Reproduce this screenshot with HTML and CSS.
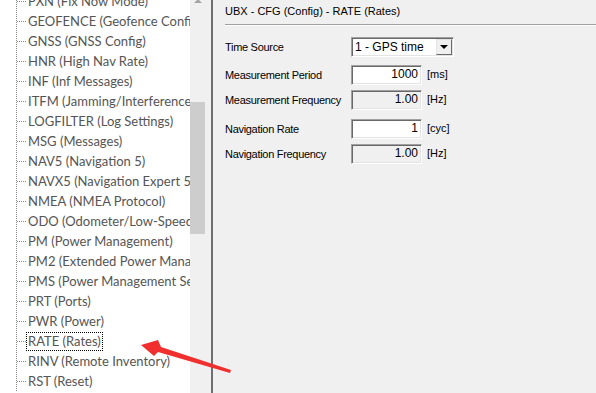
FILE: index.html
```html
<!DOCTYPE html>
<html lang="en">
<head>
    <meta charset="UTF-8">
    <title>UBX - CFG - RATE</title>
    <link rel="stylesheet" href="styles.css">
</head>
<body>

    <div class="tree">
        <ul class="tree-list">
            <li><span class="label">PXN (Fix Now Mode)</span></li>
            <li><span class="label">GEOFENCE (Geofence Config)</span></li>
            <li><span class="label">GNSS (GNSS Config)</span></li>
            <li><span class="label">HNR (High Nav Rate)</span></li>
            <li><span class="label">INF (Inf Messages)</span></li>
            <li><span class="label">ITFM (Jamming/Interference Monitor)</span></li>
            <li><span class="label">LOGFILTER (Log Settings)</span></li>
            <li><span class="label">MSG (Messages)</span></li>
            <li><span class="label">NAV5 (Navigation 5)</span></li>
            <li><span class="label">NAVX5 (Navigation Expert 5)</span></li>
            <li><span class="label">NMEA (NMEA Protocol)</span></li>
            <li><span class="label">ODO (Odometer/Low-Speed COG Filter)</span></li>
            <li><span class="label">PM (Power Management)</span></li>
            <li><span class="label">PM2 (Extended Power Management)</span></li>
            <li><span class="label">PMS (Power Management Setup)</span></li>
            <li><span class="label">PRT (Ports)</span></li>
            <li><span class="label">PWR (Power)</span></li>
            <li><span class="label selected">RATE (Rates)</span></li>
            <li><span class="label">RINV (Remote Inventory)</span></li>
            <li><span class="label">RST (Reset)</span></li>
        </ul>
    </div>

    <div class="scrollbar">
        <div class="arrow-up"></div>
        <div class="thumb"></div>
    </div>

    <div class="splitter"></div>

    <div class="panel">
        <div class="panel-title">UBX - CFG (Config) - RATE (Rates)</div>

        <div class="form">
            <div class="row row-source">
                <span class="field-label">Time Source</span>
                <div class="select">
                    <span class="select-value">1 - GPS time</span>
                    <span class="select-btn"><span class="tri"></span></span>
                </div>
            </div>
            <div class="row row-gap">
                <span class="field-label">Measurement Period</span>
                <span class="box">1000</span>
                <span class="unit">[ms]</span>
            </div>
            <div class="row">
                <span class="field-label">Measurement Frequency</span>
                <span class="box disabled">1.00</span>
                <span class="unit">[Hz]</span>
            </div>
            <div class="row row-gap-lg">
                <span class="field-label">Navigation Rate</span>
                <span class="box">1</span>
                <span class="unit">[cyc]</span>
            </div>
            <div class="row">
                <span class="field-label">Navigation Frequency</span>
                <span class="box disabled">1.00</span>
                <span class="unit">[Hz]</span>
            </div>
        </div>
    </div>

    <svg class="arrow" width="596" height="393" viewBox="0 0 596 393">
        <polygon points="141,345 158,340 161,347 231,370 230,373 158,352 154,356" fill="#f0302e"/>
    </svg>

</body>
</html>
```

FILE: styles.css
```css
body {
    margin: 0;
    width: 596px;
    height: 393px;
    overflow: hidden;
    display: flex;
    background-color: #f0f0f0;
    position: relative;
}

/* tree view */
.tree {
    width: 190px;
    height: 393px;
    background-color: #fff;
    overflow: hidden;
}
.tree-list {
    list-style: none;
    margin: -9px 0 0 16px;
    padding: 0;
    border-left: 1px dotted #8a8a8a;
    font-family: Lato, "Noto Sans", sans-serif;
    font-size: 13px;
    color: #555;
}
.tree-list li {
    height: 20px;
    display: flex;
    align-items: center;
    white-space: nowrap;
}
.tree-list li::before {
    content: "";
    width: 9px;
    border-top: 1px dotted #8a8a8a;
    flex: none;
}
.label {
    padding: 0 1px;
    border: 1px solid transparent;
    line-height: 17px;
}
.label.selected {
    border: 1px dotted #000;
}

/* scrollbar */
.scrollbar {
    width: 15px;
    height: 393px;
    background-color: #f0f0f0;
    position: relative;
}
.arrow-up {
    width: 0;
    height: 0;
    margin: -1px auto 0;
    border-left: 4px solid transparent;
    border-right: 4px solid transparent;
    border-bottom: 4px solid #a3a3a3;
}
.thumb {
    margin-top: 99px;
    height: 132px;
    background-color: #cdcdcd;
}

/* splitter */
.splitter {
    width: 6px;
    height: 393px;
    border-right: 2px solid #6f6f6f;
}

/* right panel */
.panel {
    flex: 1;
    padding-left: 12px;
    font-family: "Liberation Sans", Arial, sans-serif;
    font-size: 11px;
    color: #000;
}
.panel-title {
    height: 24px;
    line-height: 22px;
    border-bottom: 1px solid #a0a0a0;
    box-shadow: 0 1px 0 #fff;
}
.form {
    padding-top: 12px;
}
.row {
    display: flex;
    align-items: center;
    height: 20px;
    margin-top: 5px;
}
.row-source {
    margin-top: 0;
}
.row-gap {
    margin-top: 8px;
}
.row-gap-lg {
    margin-top: 9px;
}
.field-label {
    width: 126px;
    flex: none;
    letter-spacing: -0.3px;
    white-space: nowrap;
}
.box {
    box-sizing: border-box;
    width: 71px;
    height: 20px;
    line-height: 16px;
    padding-right: 3px;
    text-align: right;
    background-color: #fff;
    border: 1px solid;
    border-color: #a0a0a0 #fff #fff #a0a0a0;
    box-shadow: inset 1px 1px 0 #696969, inset -1px -1px 0 #e3e3e3;
    font-size: 12px;
}
.box.disabled {
    background-color: #f0f0f0;
}
.unit {
    margin-left: 5px;
    margin-top: -3px;
}
.select {
    box-sizing: border-box;
    width: 103px;
    height: 20px;
    display: flex;
    align-items: center;
    background-color: #fff;
    border: 1px solid;
    border-color: #a0a0a0 #fff #fff #a0a0a0;
    box-shadow: inset 1px 1px 0 #696969, inset -1px -1px 0 #e3e3e3;
}
.select-value {
    flex: 1;
    padding-left: 3px;
    font-size: 12px;
}
.select-btn {
    box-sizing: border-box;
    width: 16px;
    height: 16px;
    margin-right: 1px;
    background-color: #f0f0f0;
    border: 1px solid;
    border-color: #e3e3e3 #696969 #696969 #e3e3e3;
    display: flex;
    align-items: center;
    justify-content: center;
}
.tri {
    width: 0;
    height: 0;
    border-left: 4px solid transparent;
    border-right: 4px solid transparent;
    border-top: 4px solid #000;
}

/* annotation arrow over the screenshot */
.arrow {
    position: absolute;
    left: 0;
    top: 0;
    pointer-events: none;
}
```
